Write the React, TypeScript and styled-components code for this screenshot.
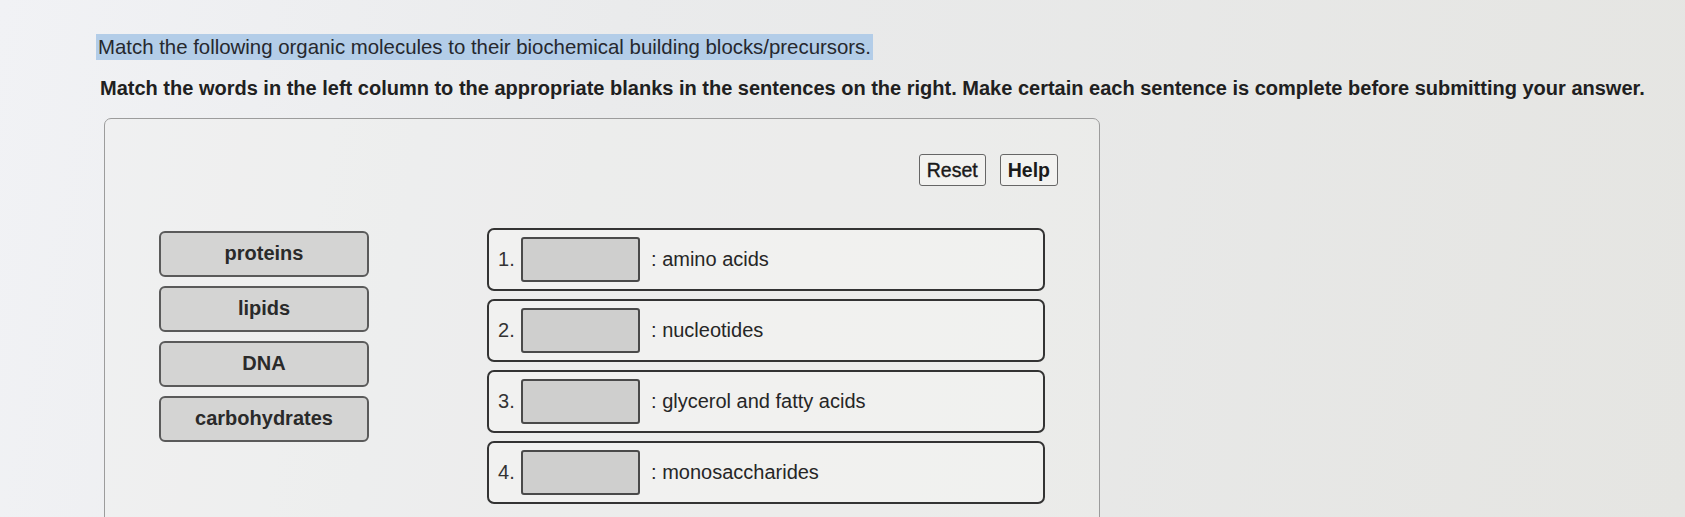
import React from "react";
import styled, { createGlobalStyle } from "styled-components";

const GlobalStyle = createGlobalStyle`
  html, body {
    margin: 0;
    padding: 0;
    height: 100%;
  }
  body {
    background: linear-gradient(100deg, #f1f2f5 0%, #eaebec 35%, #e5e5e2 100%);
    font-family: "Liberation Sans", Arial, sans-serif;
    color: #1e1e1e;
    overflow: hidden;
  }
`;

const Page = styled.div`
  width: 1685px;
  height: 517px;
  padding: 34px 0 0 96px;
  box-sizing: border-box;
`;

const Title = styled.div`
  font-size: 20.4px;
  line-height: 26px;
  color: #26282e;
`;

const Highlight = styled.span`
  background: #b3cde8;
  padding: 2px 2px;
`;

const Instructions = styled.div`
  margin-top: 15px;
  margin-left: 4px;
  font-size: 20px;
  font-weight: 700;
  line-height: 26px;
  color: #202020;
`;

const Panel = styled.div`
  margin-top: 17px;
  margin-left: 8px;
  width: 996px;
  height: 420px;
  box-sizing: border-box;
  border: 1.5px solid #9c9c9c;
  border-radius: 7px;
  padding: 35px 41px 0 52px;
  background: rgba(240, 240, 238, 0.4);
`;

const Toolbar = styled.div`
  display: flex;
  justify-content: flex-end;
  gap: 14px;
`;

const ToolButton = styled.button<{ $bold?: boolean }>`
  height: 32px;
  padding: 0 7px;
  border: 1.5px solid #666;
  border-radius: 3px;
  background: #f2f2f0;
  font-family: "Liberation Sans", Arial, sans-serif;
  font-size: 19.5px;
  font-weight: ${(p) => (p.$bold ? 700 : 400)};
  color: #1a1a1a;
  -webkit-text-stroke: ${(p) => (p.$bold ? "0" : "0.4px #1a1a1a")};
`;

const Body = styled.div`
  display: flex;
  align-items: flex-start;
  gap: 118px;
  margin-top: 45px;
`;

const WordColumn = styled.div`
  display: flex;
  flex-direction: column;
  gap: 9px;
  padding-left: 2px;
`;

const Word = styled.div`
  width: 210px;
  height: 46px;
  box-sizing: border-box;
  border: 2px solid #5a5a5a;
  border-radius: 6px;
  background: #d4d4d3;
  display: flex;
  align-items: center;
  justify-content: center;
  padding-bottom: 2px;
  font-size: 20px;
  font-weight: 700;
  color: #2a2a2a;
`;

const SentenceColumn = styled.div`
  display: flex;
  flex-direction: column;
  gap: 8px;
  margin-top: -3px;
`;

const Sentence = styled.div`
  width: 558px;
  height: 63px;
  box-sizing: border-box;
  border: 2px solid #333;
  border-radius: 7px;
  display: flex;
  align-items: center;
  padding-left: 9px;
  font-size: 20px;
  color: #262626;
  background: rgba(245, 245, 243, 0.5);
`;

const Number = styled.span`
  width: 23px;
  color: #333;
`;

const Blank = styled.div`
  width: 119px;
  height: 45px;
  box-sizing: border-box;
  border: 2px solid #4a4a4a;
  border-radius: 3px;
  background: #cfcfce;
  margin-right: 11px;
`;

const words = ["proteins", "lipids", "DNA", "carbohydrates"];
const sentences = [
  "amino acids",
  "nucleotides",
  "glycerol and fatty acids",
  "monosaccharides",
];

export default function App() {
  return (
    <Page>
      <GlobalStyle />
      <Title>
        <Highlight>
          Match the following organic molecules to their biochemical building
          blocks/precursors.
        </Highlight>
      </Title>
      <Instructions>
        Match the words in the left column to the appropriate blanks in the
        sentences on the right. Make certain each sentence is complete before
        submitting your answer.
      </Instructions>
      <Panel>
        <Toolbar>
          <ToolButton>Reset</ToolButton>
          <ToolButton $bold>Help</ToolButton>
        </Toolbar>
        <Body>
          <WordColumn>
            {words.map((w) => (
              <Word key={w}>{w}</Word>
            ))}
          </WordColumn>
          <SentenceColumn>
            {sentences.map((s, i) => (
              <Sentence key={s}>
                <Number>{i + 1}.</Number>
                <Blank />
                <span>: {s}</span>
              </Sentence>
            ))}
          </SentenceColumn>
        </Body>
      </Panel>
    </Page>
  );
}
